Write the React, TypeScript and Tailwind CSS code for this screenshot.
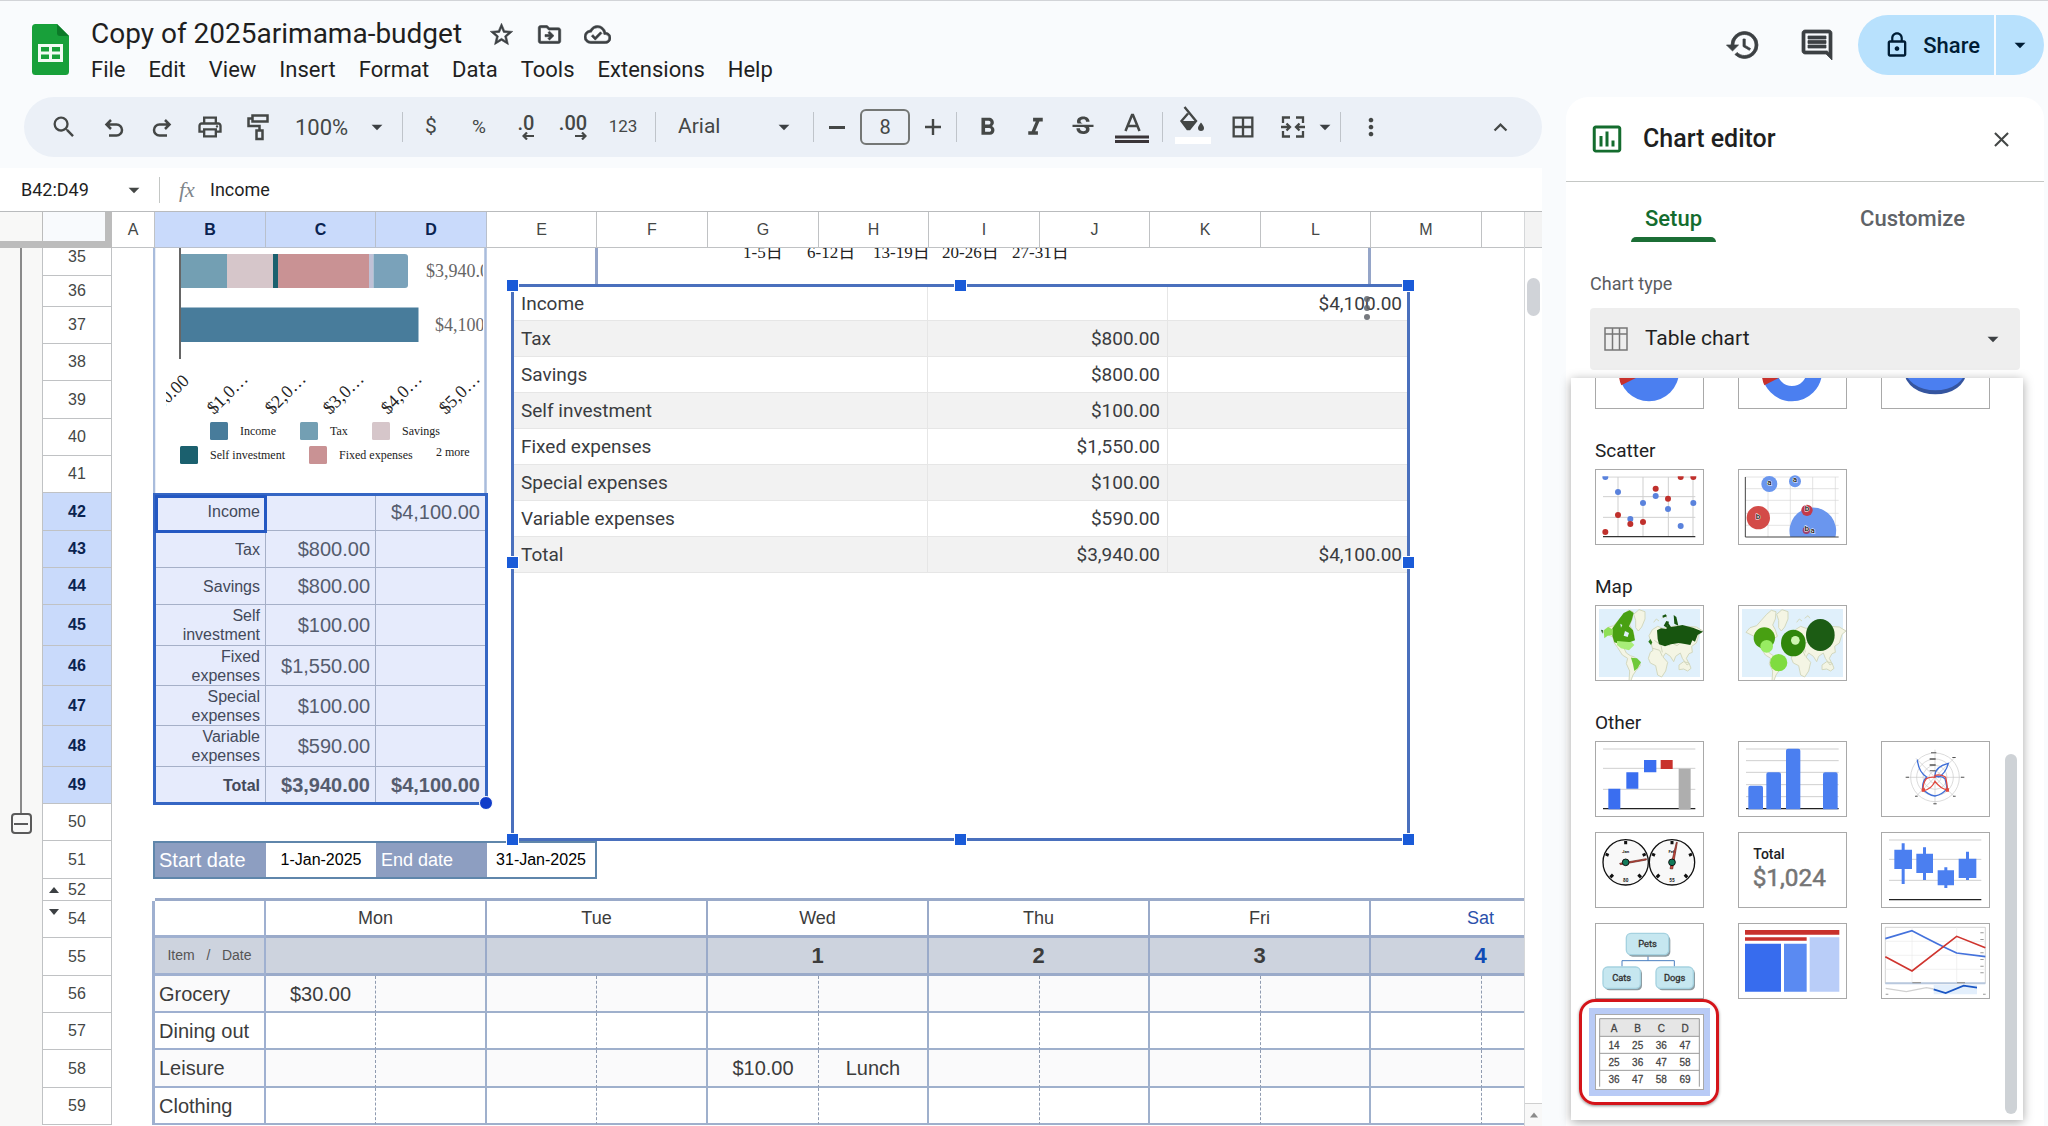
import type { ReactNode } from 'react';
import {
  MdOutlineDriveFileMove,
  MdOutlineCloudDone,
  MdStarBorder,
  MdHistory,
  MdOutlineComment,
  MdLockOutline,
  MdSearch,
  MdOutlinePrint,
  MdArrowDropDown,
  MdFormatBold,
  MdFormatItalic,
  MdStrikethroughS,
  MdBorderAll,
  MdMoreVert,
  MdKeyboardArrowUp,
  MdClose,
  MdInsertChartOutlined,
} from 'react-icons/md';

const MENUS = ['File', 'Edit', 'View', 'Insert', 'Format', 'Data', 'Tools', 'Extensions', 'Help'];
const COLUMNS = ['B', 'C', 'D', 'E', 'F', 'G', 'H', 'I', 'J', 'K', 'L', 'M', ''];
const SELECTED_COLUMNS = ['B', 'C', 'D'];

const BOLDER = '[&_path:not([fill=none])]:[stroke-width:0.5]';

function SheetsLogo() {
  return (
    <svg viewBox="0 0 37 51" className="h-[51px] w-[37px]" aria-hidden="true">
      <path d="M3.500 0H25L37 12v35.500a3.500 3.500 0 0 1-3.500 3.500h-30A3.500 3.500 0 0 1 0 47.500v-44A3.500 3.500 0 0 1 3.500 0z" fill="#18a03a" />
      <path d="M25 0l12 12H28a3 3 0 0 1-3-3z" fill="#0c7a28" />
      <path fillRule="evenodd" d="M6 20h25v18H6zm3 3v4.500h8V23zm11 0v4.500h8V23zM9 30.500V35h8v-4.500zm11 0V35h8v-4.500z" fill="#f3fbf4" />
    </svg>
  );
}

function Header() {
  return (
    <header className="flex h-24 shrink-0 items-start pl-8 pr-1">
      <a href="#home" aria-label="Sheets home" className="mt-[23px]">
        <SheetsLogo />
      </a>
      <div className="ml-[22px] mt-[13px] flex-1">
        <div className="flex h-10 items-center text-[#3c4043]">
          <h1 className="mr-[26px] text-[28px] text-[#1f1f1f]">Copy of 2025arimama-budget</h1>
          <div className="flex items-center gap-[21px]">
            <button aria-label="Star"><MdStarBorder size={27} className={BOLDER} /></button>
            <button aria-label="Move"><MdOutlineDriveFileMove size={27} className={BOLDER} /></button>
            <button aria-label="Saved to Drive"><MdOutlineCloudDone size={27} className={BOLDER} /></button>
          </div>
        </div>
        <nav className="-mt-px flex h-8 items-center gap-[23px] text-[22px] text-[#1f1f1f]">
          {MENUS.map((m) => (
            <button key={m}>{m}</button>
          ))}
        </nav>
      </div>
      <div className="mt-3.5 flex h-[60px] items-center text-[#3c4043]">
        <button aria-label="Version history" className="mr-[38px]"><MdHistory size={36} className={BOLDER} /></button>
        <button aria-label="Comments" className="mr-[23px]"><MdOutlineComment size={36} className={BOLDER} /></button>
        <div className="flex h-[60px] gap-0.5 overflow-hidden rounded-full text-[#001d35]">
          <button className="flex w-[136px] items-center justify-end gap-3 bg-[#b8e1fd] pr-3.5 text-[22px] font-medium">
            <MdLockOutline size={28} />
            Share
          </button>
          <button aria-label="Share options" className="flex w-12 items-center justify-center bg-[#b8e1fd]">
            <MdArrowDropDown size={26} />
          </button>
        </div>
      </div>
    </header>
  );
}

function Tool({ label, children, wide = 'w-12' }: { label: string; children: ReactNode; wide?: string }) {
  return (
    <button aria-label={label} className={`flex h-12 shrink-0 items-center justify-center ${wide}`}>
      {children}
    </button>
  );
}

function Divider() {
  return <div className="h-[30px] w-px shrink-0 bg-[#bfc4ca]" />;
}

function UndoIcon({ flip = false }: { flip?: boolean }) {
  return (
    <svg viewBox="0 0 24 24" className={flip ? 'h-6 w-6 -scale-x-100' : 'h-6 w-6'} fill="none" stroke="currentColor" strokeWidth="2.500">
      <path d="M9 3.500L4.500 8 9 12.500M5 8h9.500a5.500 5.500 0 0 1 0 11H7" transform="translate(0 1.500)" />
    </svg>
  );
}

function DecimalIcon({ digits, right = false }: { digits: string; right?: boolean }) {
  return (
    <span className="flex flex-col items-end text-[20px] font-medium leading-[18px]">
      {digits}
      <svg viewBox="0 0 12 8" className="h-2 w-3" fill="none" stroke="currentColor" strokeWidth="2.200">
        <path d={right ? 'M0 4h11M7 .5L10.500 4 7 7.500' : 'M12 4H1M5 .5L1.500 4 5 7.500'} />
      </svg>
    </span>
  );
}

function Toolbar() {
  return (
    <div role="toolbar" className="ml-6 flex h-[60px] shrink-0 items-center rounded-[30px] bg-[#ebf0f7] pl-3.5 pr-[18px] text-[#444746]">
      <Tool label="Search menus" wide="w-[52px]"><MdSearch size={28} /></Tool>
      <Tool label="Undo"><UndoIcon /></Tool>
      <Tool label="Redo"><UndoIcon flip /></Tool>
      <Tool label="Print"><MdOutlinePrint size={28} /></Tool>
      <Tool label="Paint format">
        <svg viewBox="0 0 24 28" className="h-7 w-6" fill="none" stroke="currentColor" strokeWidth="2.500">
          <path d="M6.500 2.500h15v6h-15zM6.500 5.500H2.500v7.500h11v4M10.500 17.500h6V26h-6z" />
        </svg>
      </Tool>
      <div className="relative ml-[13px] flex w-[107px] items-center">
        <select aria-label="Zoom" defaultValue="100%" className="w-full appearance-none bg-transparent text-[22px]">
          <option>100%</option>
        </select>
        <MdArrowDropDown size={26} className="pointer-events-none absolute right-3 text-[#3c4043]" />
      </div>
      <Divider />
      <Tool label="Format as currency" wide="ml-1 w-12"><span className="text-[21px]">$</span></Tool>
      <Tool label="Format as percent"><span className="text-[19px]">%</span></Tool>
      <Tool label="Decrease decimal places" wide="w-[46px]"><DecimalIcon digits=".0" /></Tool>
      <Tool label="Increase decimal places"><DecimalIcon digits=".00" right /></Tool>
      <Tool label="More formats" wide="w-[52px]"><span className="text-[17px]">123</span></Tool>
      <div className="ml-1.5" />
      <Divider />
      <div className="relative ml-[22px] flex w-[135px] items-center">
        <select aria-label="Font" defaultValue="Arial" className="w-full appearance-none bg-transparent text-[21px]">
          <option>Arial</option>
        </select>
        <MdArrowDropDown size={26} className="pointer-events-none absolute right-4 text-[#3c4043]" />
      </div>
      <Divider />
      <Tool label="Decrease font size" wide="w-[46px]">
        <span className="h-[3px] w-4 bg-[#444746]" />
      </Tool>
      <input aria-label="Font size" defaultValue="8" className="h-9 w-[50px] rounded-md border-2 border-[#747775] bg-transparent text-center text-[20px]" />
      <Tool label="Increase font size" wide="w-[46px]">
        <svg viewBox="0 0 16 16" className="h-4 w-4" stroke="currentColor" strokeWidth="2.400"><path d="M8 0v16M0 8h16" /></svg>
      </Tool>
      <Divider />
      <Tool label="Bold" wide="ml-1.5 w-12"><MdFormatBold size={29} /></Tool>
      <Tool label="Italic"><MdFormatItalic size={29} /></Tool>
      <Tool label="Strikethrough"><MdStrikethroughS size={28} /></Tool>
      <Tool label="Text color" wide="w-[50px]">
        <svg viewBox="0 0 36 40" className="mt-1 h-10 w-9">
          <path d="M11.500 22L18 6h1l6.500 16M14 17h9" fill="none" stroke="currentColor" strokeWidth="2.500" />
          <path d="M1 26.500h34v3H1zM1 31h34v3H1z" fill="#3a3538" />
        </svg>
      </Tool>
      <div className="ml-[5px]" />
      <Divider />
      <Tool label="Fill color" wide="ml-1.5 w-12">
        <svg viewBox="0 0 36 44" className="h-11 w-9">
          <path d="M9.500 2l11.500 14-6.500 8h-2L6.500 16 13 8.500" fill="none" stroke="currentColor" strokeWidth="2.400" />
          <path d="M7 16h14l-6.500 8h-2z" fill="currentColor" />
          <path d="M26 17.500s-3 3.500-3 5.500a3 3 0 0 0 6 0c0-2-3-5.500-3-5.500z" fill="currentColor" />
          <path d="M0 32h36v7H0z" fill="#fff" />
        </svg>
      </Tool>
      <Tool label="Borders" wide="w-[52px]"><MdBorderAll size={28} /></Tool>
      <Tool label="Merge cells">
        <svg viewBox="0 0 24 24" className="h-6 w-6" fill="none" stroke="currentColor" strokeWidth="2.300">
          <path d="M9 2.500H2V8M15 2.500h7V8M9 21.500H2V16M15 21.500h7V16M0 12h8M24 12h-8M5.500 8.500L9 12l-3.500 3.500M18.500 8.500L15 12l3.500 3.500" />
        </svg>
      </Tool>
      <Tool label="Merge options" wide="w-4"><MdArrowDropDown size={26} className="shrink-0 text-[#3c4043]" /></Tool>
      <div className="ml-[7px]" />
      <Divider />
      <Tool label="More" wide="ml-1.5 w-12"><MdMoreVert size={28} /></Tool>
      <div className="flex-1" />
      <Tool label="Hide the menus"><MdKeyboardArrowUp size={27} /></Tool>
    </div>
  );
}

function FormulaBar() {
  return (
    <div className="mt-[11px] flex h-11 shrink-0 items-center border-b border-[#b9bbbd] bg-white text-[18px] text-[#1f1f1f]">
      <input aria-label="Name box" defaultValue="B42:D49" className="ml-[21px] w-[100px]" />
      <button aria-label="Named ranges" className="text-[#444746]"><MdArrowDropDown size={26} /></button>
      <div className="ml-3 h-[26px] w-px bg-[#c4c7c5]" />
      <span className="ml-[19px] w-[31px] font-['Liberation_Serif'] text-[22px] italic text-[#80868b]">fx</span>
      <input aria-label="Formula" defaultValue="Income" className="flex-1" />
    </div>
  );
}

function RowHead({ n, selected = false, marker }: { n: number; selected?: boolean; marker?: 'up' | 'down' }) {
  return (
    <th
      scope="row"
      className={
        selected
          ? 'border-x border-b border-[#c0c2c4] bg-[#c9dafb] text-[16px] text-[#0a2350]'
          : `relative border-x border-b border-[#c0c2c4] bg-white text-[16px] font-normal text-[#444746] ${n === 35 ? 'pb-2.5 align-bottom leading-4' : 'leading-4'}`
      }
    >
      {n}
      {marker && (
        <svg viewBox="0 0 10 6" className={marker === 'up' ? 'absolute left-1.5 top-2 h-1.5 w-2.5' : 'absolute left-1.5 top-2 h-1.5 w-2.5 rotate-180'}>
          <path d="M5 0l5 6H0z" fill="#3c4043" />
        </svg>
      )}
    </th>
  );
}

const TOTALS: { n: number; h: string; label: string; c: string; d: string }[] = [
  { n: 42, h: 'h-[38px]', label: 'Income', c: '', d: '$4,100.00' },
  { n: 43, h: 'h-[37px]', label: 'Tax', c: '$800.00', d: '' },
  { n: 44, h: 'h-[37px]', label: 'Savings', c: '$800.00', d: '' },
  { n: 45, h: 'h-[41px]', label: 'Self investment', c: '$100.00', d: '' },
  { n: 46, h: 'h-[40px]', label: 'Fixed expenses', c: '$1,550.00', d: '' },
  { n: 47, h: 'h-[40px]', label: 'Special expenses', c: '$100.00', d: '' },
  { n: 48, h: 'h-[41px]', label: 'Variable expenses', c: '$590.00', d: '' },
  { n: 49, h: 'h-[37px]', label: 'Total', c: '$3,940.00', d: '$4,100.00' },
];

const EMPTY_ROWS: [number, string][] = [
  [35, 'h-[28px]'],
  [36, 'h-[31px]'],
  [37, 'h-[37px]'],
  [38, 'h-[37px]'],
  [39, 'h-[38px]'],
  [40, 'h-[37px]'],
  [41, 'h-[37px]'],
];

const DAYS = ['Mon', 'Tue', 'Wed', 'Thu', 'Fri', 'Sat'];
const DATES = ['', '', '1', '2', '3', '4'];
const ITEMS: { n: number; h: string; label: string; cells: Record<number, string> }[] = [
  { n: 56, h: 'h-[37px] bg-[#fafafb]', label: 'Grocery', cells: { 0: '$30.00' } },
  { n: 57, h: 'h-[37px]', label: 'Dining out', cells: {} },
  { n: 58, h: 'h-[38px] bg-[#fafafb]', label: 'Leisure', cells: { 4: '$10.00', 5: 'Lunch' } },
  { n: 59, h: 'h-[37px]', label: 'Clothing', cells: {} },
];

function Grid() {
  return (
    <table className="w-[1549px] table-fixed border-separate border-spacing-0 text-[16px]">
      <colgroup>
        <col className="w-[70px]" />
        <col className="w-[43px]" />
        <col className="w-[111px]" />
        <col className="w-[110px]" />
        <col className="w-[111px]" />
        <col className="w-[110px]" />
        <col className="w-[111px]" />
        <col className="w-[111px]" />
        <col className="w-[110px]" />
        <col className="w-[111px]" />
        <col className="w-[110px]" />
        <col className="w-[111px]" />
        <col className="w-[110px]" />
        <col className="w-[111px]" />
        <col className="w-[110px]" />
      </colgroup>
      <thead>
        <tr className="h-9 text-[#444746]">
          <th className="border-b-[7px] border-l border-r-[7px] border-[#bcbcbc] bg-[#f8fafd]" />
          <th className="border-b border-r border-[#c0c2c4] font-normal">A</th>
          {COLUMNS.map((c) => (
            <th
              key={c}
              scope="col"
              className={
                SELECTED_COLUMNS.includes(c)
                  ? 'border-b border-r border-[#b9c0cc] bg-[#c9dafb] text-[#0a2350]'
                  : 'border-b border-r border-[#c0c2c4] font-normal'
              }
            >
              {c}
            </th>
          ))}
        </tr>
      </thead>
      <tbody>
        {EMPTY_ROWS.map(([n, h]) => (
          <tr key={n} className={h}>
            <RowHead n={n} />
            <td colSpan={14} />
          </tr>
        ))}
        {TOTALS.map((r) => {
          const weight = r.n === 49 ? 'font-bold' : '';
          return (
            <tr key={r.n} className={r.h}>
              <RowHead n={r.n} selected />
              <td />
              <td className={`border-b border-r border-[#a6b0c8] bg-[#e6ebfc] pl-5 pr-[5px] text-right leading-[19px] text-[#43495a] ${weight}`}>{r.label}</td>
              <td className={`border-b border-r border-[#a6b0c8] bg-[#e6ebfc] pr-[5px] text-right text-[20px] leading-6 text-[#555c6e] ${weight}`}>{r.c}</td>
              <td className={`border-b border-r border-[#a6b0c8] bg-[#e6ebfc] pr-1.5 text-right text-[20px] leading-6 text-[#555c6e] ${weight}`}>{r.d}</td>
              <td colSpan={10} />
            </tr>
          );
        })}
        <tr className="h-[37px]">
          <RowHead n={50} />
          <td colSpan={14} />
        </tr>
        <tr className="h-[38px]">
          <RowHead n={51} />
          <td className="border-r-2 border-[#5f86ab]" />
          <td className="border-y-2 border-[#5f86ab] bg-[#8d9ec1] pl-1 text-[20px] leading-6 text-white">Start date</td>
          <td className="border-y-2 border-[#5f86ab] text-center text-black">1-Jan-2025</td>
          <td className="border-y-2 border-[#5f86ab] bg-[#8d9ec1] pl-[5px] text-[18px] leading-6 text-white">End date</td>
          <td className="border-y-2 border-r-2 border-[#5f86ab] text-center text-black">31-Jan-2025</td>
          <td colSpan={9} />
        </tr>
        <tr className="h-[22px]">
          <RowHead n={52} marker="up" />
          <td />
          <td colSpan={13} className="border-b-[3px] border-[#9aaac9]" />
        </tr>
        <tr className="h-[37px] text-[18px] text-[#3c3c3c]">
          <RowHead n={54} marker="down" />
          <td className="border-r-[3px] border-[#9fb0d0]" />
          <td className="border-b-[3px] border-r-2 border-[#9fb0d0]" />
          {DAYS.map((d) => (
            <td key={d} colSpan={2} className={`border-b-[3px] border-r-2 border-[#9aaac9] text-center leading-6 ${d === 'Sat' ? 'text-[#2b51ab]' : ''}`}>
              {d}
            </td>
          ))}
        </tr>
        <tr className="h-[38px] bg-[#cdd3de] text-[#3c3c3c]">
          <RowHead n={55} />
          <td className="border-r-[3px] border-[#9fb0d0] bg-white" />
          <td className="whitespace-pre border-b-[3px] border-r-2 border-[#9fb0d0] text-center text-[14px] text-[#555]">{'Item   /   Date'}</td>
          {DATES.map((d, i) => (
            <td key={i} colSpan={2} className={`border-b-[3px] border-r-2 border-[#9aaac9] text-center text-[22px] font-bold leading-6 ${d === '4' ? 'text-[#0f4bb5]' : ''}`}>
              {d}
            </td>
          ))}
        </tr>
        {ITEMS.map((r) => (
          <tr key={r.n} className={`text-[20px] text-[#3c3c3c] ${r.h}`}>
            <RowHead n={r.n} />
            <td className="border-r-[3px] border-[#9fb0d0] bg-white" />
            <td className="border-b-2 border-r-2 border-[#9fb0d0] pl-1 leading-6">{r.label}</td>
            {Array.from({ length: 12 }, (_, i) => (
              <td
                key={i}
                className={
                  i % 2 === 0
                    ? 'border-b-2 border-r border-[#9fb0cc] text-center leading-6 [border-right-color:#8f9bb0] [border-right-style:dashed]'
                    : 'border-b-2 border-r-2 border-[#9fb0cc] text-center leading-6'
                }
              >
                {r.cells[i]}
              </td>
            ))}
          </tr>
        ))}
      </tbody>
    </table>
  );
}

const LEGEND: [number, number, string, string][] = [
  [210, 422, '#487c9b', 'Income'],
  [300, 422, '#739fb3', 'Tax'],
  [372, 422, '#d6c6ca', 'Savings'],
  [180, 446, '#1b606e', 'Self investment'],
  [309, 446, '#c99294', 'Fixed expenses'],
];

/* Stacked bar chart that covers columns B to D; its upper part is scrolled out of view. */
function BarChart() {
  return (
    <svg viewBox="153 248 334 245" className="absolute left-[111px] top-9 h-[245px] w-[334px] font-['Liberation_Serif']">
      <defs>
        <clipPath id="plot"><path d="M166 248h317v245H166z" /></clipPath>
      </defs>
      <path d="M153 248h334v245H153z" fill="#fff" />
      <path d="M154 248v245M485.500 248v245" stroke="#a9bcdc" strokeWidth="2.500" />
      <path d="M181 254h46v34h-46z" fill="#739fb3" />
      <path d="M227 254h46v34h-46z" fill="#d6c6ca" />
      <path d="M273 254h5v34h-5z" fill="#1b606e" />
      <path d="M278 254h91v34h-91z" fill="#c99294" />
      <path d="M369 254h4.500v34H369z" fill="#c0c1d6" />
      <path d="M373.500 254H405a3 3 0 0 1 3 3v28a3 3 0 0 1-3 3h-31.500z" fill="#7aa2ba" />
      <path d="M181 307.500h237.500V342H181z" fill="#487c9b" />
      <path d="M180 248v111" stroke="#333" strokeWidth="1.500" />
      <g clipPath="url(#plot)">
        <text x="426" y="277" fontSize="18" fill="#666">$3,940.0</text>
        <text x="435" y="331" fontSize="18" fill="#666">$4,100</text>
        <text transform="translate(190 382) rotate(-45)" textAnchor="end" fontSize="18" fill="#222">$0.00</text>
        {['$1,0…', '$2,0…', '$3,0…', '$4,0…', '$5,0…'].map((t, i) => (
          <text key={t} transform={`translate(${249 + i * 58} 380) rotate(-45)`} textAnchor="end" fontSize="18" fill="#222">{t}</text>
        ))}
      </g>
      {LEGEND.map(([x, y, fill, label]) => (
        <g key={label}>
          <rect x={x} y={y} width="18" height="18" rx="1.500" fill={fill} />
          <text x={x + 30} y={y + 13} fontSize="12" fill="#222">{label}</text>
        </g>
      ))}
      <text x="436" y="456" fontSize="12" fill="#222">2 more</text>
    </svg>
  );
}

/* Bottom edge of the weekly chart above the table chart. */
function WeeklyChart() {
  return (
    <svg viewBox="595 248 776 38" className="absolute left-[553px] top-9 h-[38px] w-[776px] font-['Liberation_Serif','Noto_Sans_CJK_JP',serif]">
      <path d="M596.500 248v38M1369.500 248v38" stroke="#95a5c8" strokeWidth="3" />
      <g fontSize="17" fill="#222">
        <text x="743" y="258">1-5日</text>
        <text x="807" y="258">6-12日</text>
        <text x="873" y="258">13-19日</text>
        <text x="942" y="258">20-26日</text>
        <text x="1012" y="258">27-31日</text>
      </g>
    </svg>
  );
}

const HANDLES = [
  '-left-2 -top-2',
  'left-1/2 -ml-[7px] -top-2',
  '-right-2 -top-2',
  '-left-2 top-1/2 -mt-[7px]',
  '-right-2 top-1/2 -mt-[7px]',
  '-bottom-2 -left-2',
  '-bottom-2 left-1/2 -ml-[7px]',
  '-bottom-2 -right-2',
];

function TableChart() {
  return (
    <div className="absolute left-[469px] top-[72px] h-[557px] w-[899px] border-[3px] border-[#4a70bd] bg-white">
      <table className="w-full table-fixed border-separate border-spacing-0 font-[Roboto] text-[19px] text-[#3a3c3f]">
        <colgroup>
          <col />
          <col className="w-[240px]" />
          <col className="w-[239px]" />
        </colgroup>
        <tbody>
          {TOTALS.map((r, i) => (
            <tr key={r.n} className={i === 0 ? 'h-[34px]' : i % 2 ? 'h-9 bg-[#f2f2f2]' : 'h-9'}>
              <td className="border-b border-r border-[#e6e6e6] pl-[7px] leading-6">{r.label}</td>
              <td className="border-b border-r border-[#e6e6e6] pr-[7px] text-right leading-6">{r.c}</td>
              <td className="border-b border-[#e6e6e6] pr-[5px] text-right leading-6">{r.d}</td>
            </tr>
          ))}
        </tbody>
      </table>
      <button aria-label="Chart options" className="absolute right-[37px] top-2 text-[#5f6368]">
        <svg viewBox="0 0 6 26" className="h-[26px] w-1.5" fill="currentColor" fillOpacity="0.850">
          <circle cx="3" cy="4" r="3" />
          <circle cx="3" cy="13" r="3" />
          <circle cx="3" cy="22" r="3" />
        </svg>
      </button>
      {HANDLES.map((pos) => (
        <span key={pos} className={`absolute h-[13px] w-[13px] border border-white bg-[#1a5bd8] ${pos}`} />
      ))}
    </div>
  );
}

function Sheet() {
  return (
    <div className="flex min-h-0 flex-1 bg-white font-['Liberation_Sans',Arial,sans-serif]">
      <div className="flex w-[42px] shrink-0 flex-col items-center bg-[#f8f8f7]">
        <div className="h-9 w-full shrink-0 border-b-[7px] border-[#bcbcbc]" />
        <div className="h-[565px] w-[2px] shrink-0 bg-[#8a8a8a]" />
        <button aria-label="Collapse group" className="flex h-[21px] w-[21px] shrink-0 items-center justify-center rounded border-2 border-[#5a5a5a]">
          <span className="h-0.5 w-3.5 bg-[#5a5a5a]" />
        </button>
      </div>
      <div className="relative min-w-0 flex-1 overflow-hidden">
        <Grid />
        <BarChart />
        <WeeklyChart />
        <div className="absolute left-[111px] top-[281px] h-[312px] w-[335px] border-[3px] border-[#3566c4]">
          <div className="absolute -left-px -top-px h-[38px] w-[112px] border-[3px] border-[#2458c2]" />
          <span className="absolute -bottom-2 -right-2 h-[14px] w-[14px] rounded-full border border-white bg-[#103cc9]" />
        </div>
        <TableChart />
      </div>
      <div className="flex w-[18px] shrink-0 flex-col border-l border-[#d5d7d9]">
        <div className="h-9 shrink-0 border-b border-[#c0c2c4] bg-[#f3f3f3]" />
        <div className="flex-1 pl-0.5 pt-[30px]">
          <div className="h-[38px] w-[13px] rounded-full bg-[#d0d3d8]" />
        </div>
        <button aria-label="Scroll up" className="flex h-[23px] items-start justify-center border-t border-[#cfcfcf] bg-[#f8f8f8] pt-2">
          <svg viewBox="0 0 10 6" className="h-1.5 w-2"><path d="M5 0l5 6H0z" fill="#8a8a8a" /></svg>
        </button>
      </div>
    </div>
  );
}

function Thumb({ label, children }: { label: string; children: ReactNode }) {
  return (
    <button role="option" aria-selected={label === 'Table chart'} aria-label={label} className="h-[76px] w-[109px] border border-[#a9a9a9] bg-white">
      <svg viewBox="3 3 321 222" className="block h-full w-full" aria-hidden="true">{children}</svg>
    </button>
  );
}

const BLUE = '#4b7ff0';
const RED = '#c8312c';

const BLUE_DOTS = [[31, 24], [69, 69], [106, 150], [144, 102], [182, 81], [219, 120], [257, 171], [295, 102]];
const RED_DOTS = [[31, 189], [69, 138], [106, 165], [144, 159], [182, 59], [219, 89], [257, 24], [295, 24]];

const LAND =
  'M24 82l12-14 20-6 14-16 16-18 14-12 14 4-2 22-8 18 8 14 6 20-12 8-10 16-8 14 6 12 12 8 12 4 16 14 2 12-12 14-10 14-8 22-4-4 2-30-10-22 4-16-16-10-14-22-10-14-4-18-14-6z' +
  'M116 28l16-14 18 6 0 22-10 24-10 12-8-10 0-22z' +
  'M162 92l10-18 16-10 16 6 40-8 60 4 20 12-12 10-8 26-14 10 2 18-10 4-8 14 8 16-6 4-14-20-6-16-14 10-6 16-10-16-14-10-8 12 14 16-6 26-12 18-12-6-6-28-16-8-6-14 6-18 8-6z' +
  'M252 180l14-10 16 4 6 16-10 8-12-6-14 2z';

function MapBase() {
  return (
    <>
      <path d="M12 12h303v204H12z" fill="#e0f0fb" />
      <path d={LAND} fill="#f4f5e4" stroke="#d3d8be" strokeWidth="3" />
      <path d="M178 106l14 10 18-4 14 10M174 130l20 6 8 18M196 112l6 30M220 108l26 14 12-10M86 120l16 10M108 158l14 8M176 52l8-10 8 6M200 40l10-8 6 8" fill="none" stroke="#d3d8be" strokeWidth="3" />
    </>
  );
}

function Gauge({ cx, name, value, needle }: { cx: number; name: string; value: string; needle: string }) {
  return (
    <g>
      <circle cx={cx} cy="91" r="68" fill="#f8f8f8" stroke="#111" strokeWidth="4" />
      <g stroke="#111" strokeWidth="9">
        <path d={`M${cx} 27v10M${cx - 60} 66l9 4M${cx + 60} 66l-9 4M${cx - 46} 136l8-8M${cx + 46} 136l-8-8`} />
      </g>
      <text x={cx} y="62" textAnchor="middle" fontSize="13" fontWeight="bold" fill="#222">{name}</text>
      <text x={cx} y="149" textAnchor="middle" fontSize="14" fontWeight="bold" fill="#222">{value}</text>
      <path d={needle} fill="#d2493c" stroke="#5a1c16" strokeWidth="2" />
      <circle cx={cx} cy="91" r="10" fill="#137a5a" stroke="#111" strokeWidth="3" />
    </g>
  );
}

function OrgBox({ x, y, w, label }: { x: number; y: number; w: number; label: string }) {
  return (
    <g>
      <rect x={x + 5} y={y + 6} width={w} height="64" rx="14" fill="#8d9da3" />
      <rect x={x} y={y} width={w} height="64" rx="14" fill="#c6e7f0" stroke="#a5d2e0" strokeWidth="4" />
      <text x={x + w / 2} y={y + 41} textAnchor="middle" fontSize="28" stroke="#333" strokeWidth="1" fill="#333">{label}</text>
    </g>
  );
}

function Group({ title, children }: { title?: string; children: ReactNode }) {
  return (
    <div role="group" aria-label={title ?? 'Pie'} className="mb-[26px]">
      {title && <h3 className="h-[34px] text-[19px] leading-[32px] text-[#202124]">{title}</h3>}
      <div className="grid grid-cols-[repeat(3,109px)] gap-x-[34px] gap-y-[15px]">{children}</div>
    </div>
  );
}

function ChartTypeMenu() {
  return (
    <div role="listbox" aria-label="Chart types" className="absolute -left-[19px] top-[70px] flex h-[742px] w-[452px] overflow-hidden bg-white shadow-[0_2px_10px_rgba(0,0,0,0.35)]">
      <div className="-mt-[45px] flex-1 pl-6">
        <Group>
          <Thumb label="Pie chart">
            <circle cx="162" cy="115" r="90" fill={BLUE} />
            <path d="M162 115l-83 42a90 90 0 0 1-7-45z" fill={RED} />
          </Thumb>
          <Thumb label="Doughnut chart">
            <circle cx="162" cy="115" r="67" fill="none" stroke={BLUE} strokeWidth="46" />
            <path d="M122 135l-43 22a90 90 0 0 1-7-45l46 3z" fill={RED} />
          </Thumb>
          <Thumb label="3D pie chart">
            <ellipse cx="163" cy="118" rx="92" ry="66" fill="#35559f" />
            <ellipse cx="163" cy="106" rx="92" ry="66" fill={BLUE} />
          </Thumb>
        </Group>
        <Group title="Scatter">
          <Thumb label="Scatter chart">
            <path d="M24 24h277M24 83h277M24 145h277M69 24v178M144 24v178M220 24v178M294 24v178" stroke="#cfcfcf" strokeWidth="3" />
            <path d="M24 203h277" stroke="#333" strokeWidth="4" />
            {BLUE_DOTS.map(([x, y]) => <circle key={x} cx={x} cy={y} r="9" fill="#5a82dc" />)}
            {RED_DOTS.map(([x, y]) => <circle key={x} cx={x} cy={y} r="9" fill="#c0302c" />)}
            <path d="M20 10h285v12H20z" fill="#fff" />
          </Thumb>
          <Thumb label="Bubble chart">
            <path d="M22 24h280M22 59h280M22 94h280M22 133h280M22 169h280M90 24v180M157 24v180M224 24v180M292 24v180" stroke="#d6d6d6" strokeWidth="2" />
            <circle cx="94" cy="45" r="24" fill="#6a96ee" />
            <circle cx="171" cy="37" r="18" fill="#6a96ee" />
            <circle cx="61" cy="146" r="35" fill="#d34b48" />
            <path d="M157 204a70 70 0 1 1 135 0z" fill="#6a96ee" />
            <circle cx="207" cy="124" r="17" fill="#c43a4a" />
            <circle cx="205" cy="184" r="11" fill="#a0406a" />
            <path d="M22 24v180h280" stroke="#444" strokeWidth="3" fill="none" />
            <g fontSize="24" fontWeight="500" textAnchor="middle" fill="#111" stroke="#fff" strokeWidth="3" paintOrder="stroke">
              <text x="94" y="47">a</text>
              <text x="171" y="39">a</text>
              <text x="60" y="149">b</text>
              <text x="207" y="127">b</text>
              <text x="206" y="186">b</text>
              <text x="224" y="193">a</text>
            </g>
          </Thumb>
        </Group>
        <Group title="Map">
          <Thumb label="Geo chart">
            <MapBase />
            <path d="M52 70l16-22 18-24 18-8 12 8-6 22-8 18 12 12 6 30-22 8-14 6-26-8-6-20z" fill="#48a012" />
            <path d="M26 76l14-10 14 8-2 16-14 2-10 8z" fill="#8fe057" />
            <path d="M66 108l44 4 8 8-16 16-24-6-12-10z" fill="#a8ee78" />
            <path d="M90 78l12 6-4 12-12-4zM76 56l6 4-4 8z" fill="#e0f0fb" />
            <path d="M108 158l18 2 12 12-10 18-10 8-4-20z" fill="#6fc93a" />
            <path d="M186 76l12-6 16 2 6-18 8 12 24-4 10-2 32 8 30 12-16 10-8 20-8-4-6 14-12-2-22-4-24 4-18 6-18-6-4-16z" fill="#17550f" />
            <path d="M202 32l10-4 4 6-12 4zM236 30l8 6 6 26-12-6zM206 62l8-14 8 2-6 18z" fill="#17550f" />
            <path d="M160 110l6-8 6 10-4 8z" fill="#2c7a1b" />
            <path d="M18 74l6 2-2 10z" fill="#17550f" />
          </Thumb>
          <Thumb label="Geo chart with markers">
            <MapBase />
            <circle cx="79" cy="99" r="32" fill="#48a012" />
            <circle cx="86" cy="124" r="19" fill="#98ec62" />
            <ellipse cx="166" cy="114" rx="37" ry="40" fill="#2f860b" />
            <circle cx="172" cy="106" r="13" fill="#cdf5b0" />
            <ellipse cx="247" cy="90" rx="43" ry="48" fill="#1c5c14" />
            <circle cx="122" cy="173" r="26" fill="#7fdc40" />
          </Thumb>
        </Group>
        <Group title="Other">
          <Thumb label="Waterfall chart">
            <path d="M24 24h277M24 82h277M24 145h277" stroke="#cfcfcf" strokeWidth="3" />
            <path d="M24 203h277" stroke="#222" strokeWidth="4" />
            <path d="M40 143h36v62H40zM94 94h36v49H94zM147 57h37v37h-37z" fill="#3a6ef0" />
            <path d="M197 57h36v27h-36z" fill={RED} />
            <path d="M251 83h36v122h-36z" fill="#aeaeae" />
          </Thumb>
          <Thumb label="Histogram">
            <path d="M24 24h278M24 59h278M24 94h278M24 131h278M24 167h278" stroke="#cfcfcf" strokeWidth="3" />
            <path d="M24 203h278" stroke="#222" strokeWidth="4" />
            <g fill={BLUE}>
              <path d="M31 205v-65a6 6 0 0 1 6-6h32a6 6 0 0 1 6 6v65zM85 205v-105a6 6 0 0 1 6-6h32a6 6 0 0 1 6 6v105zM144 205V29a6 6 0 0 1 6-6h31a6 6 0 0 1 6 6v176zM255 205v-105a6 6 0 0 1 6-6h32a6 6 0 0 1 6 6v105z" />
            </g>
          </Thumb>
          <Thumb label="Radar chart">
            <g fill="none" stroke="#c9c9c9" strokeWidth="2">
              <circle cx="162" cy="109" r="73" />
              <circle cx="162" cy="109" r="55" />
              <circle cx="162" cy="109" r="36" />
              <circle cx="162" cy="109" r="18" />
              <path d="M162 26v166M78 109h166M105 52l114 114M219 52L105 166" />
            </g>
            <path d="M109 56q4 38 28 52-14 14-12 36 16 18 37 21 22-4 36-22-2-18-6-30-10-10-30-6-2-30 40-40-8 30-30 42" fill="none" stroke="#3f6fd8" strokeWidth="4" />
            <path d="M162 103q20-4 32 6 4 18 6 38-22-4-38-26-12 26-36 28 0-26 10-36 12-6 26-4z" fill="none" stroke="#e0483e" strokeWidth="4" />
            <path d="M194 142h10v10h-10zM122 142h10v10h-10z" fill="#e0483e" />
            <g fill="#555"><path d="M150 34h16v3h-16zM146 52h18v4h-18zM146 70h18v4h-18zM146 88h18v3h-18zM157 187h10v3h-10zM74 107h10v3H74zM240 107h10v3h-10zM214 48h10v3h-10zM102 164h8v3h-8zM216 164h8v3h-8z" /></g>
          </Thumb>
          <Thumb label="Gauge chart">
            <Gauge cx={92} name="Jan" value="80" needle="M74 94l80-14v4l-78 14z" />
            <Gauge cx={231} name="Feb" value="55" needle="M225 110l19-79h3l-14 80z" />
          </Thumb>
          <Thumb label="Scorecard chart">
            <text x="46" y="82" fontSize="42" fontWeight="500" fill="#202124">Total</text>
            <text x="44" y="162" fontSize="73" stroke="#757575" strokeWidth="1.500" fill="#757575">$1,024</text>
          </Thumb>
          <Thumb label="Candlestick chart">
            <path d="M24 24h277M24 82h277M24 145h277" stroke="#cfcfcf" strokeWidth="3" />
            <path d="M24 203h277" stroke="#222" strokeWidth="4" />
            <path d="M40 53h53v58H40zM62 34h9v122h-9zM106 65h50v58h-50zM126 46h9v98h-9zM170 115h49v45h-49zM190 106h9v62h-9zM233 80h53v58h-53zM255 59h9v85h-9z" fill={BLUE} />
          </Thumb>
          <Thumb label="Organizational chart">
            <path d="M159 95v18M81 131v-18h157v18" fill="none" stroke="#4a7fc0" strokeWidth="3" />
            <OrgBox x={94} y={31} w={127} label="Pets" />
            <OrgBox x={24} y={132} w={112} label="Cats" />
            <OrgBox x={183} y={132} w={112} label="Dogs" />
          </Thumb>
          <Thumb label="Treemap chart">
            <path d="M21 21h283v14H21zM21 43h185v10H21z" fill={RED} />
            <path d="M21 62h108v144H21z" fill="#376cee" />
            <path d="M138 62h68v144h-68z" fill="#5a8af2" />
            <path d="M215 43h89v163h-89z" fill="#b9cdf8" />
          </Thumb>
          <Thumb label="Timeline chart">
            <path d="M13 13h300v168H13z" fill="none" stroke="#bdbdbd" strokeWidth="2" />
            <path d="M13 55h300M13 97h300M13 139h300M93 13v168M227 13v168" stroke="#ececec" strokeWidth="2" />
            <path d="M13 178h300v6H13z" fill="#b8c8de" />
            <path d="M13 47l80-24q80 42 134 67l86 11" fill="none" stroke="#4472dc" strokeWidth="5" />
            <path d="M13 101l80 43L227 40l86 34" fill="none" stroke="#cf342e" strokeWidth="5" />
            <path d="M14 196l62 10 60-12 22 4" fill="none" stroke="#d0d0d0" strokeWidth="4" />
            <path d="M158 186h130v28H158z" fill="#e3effc" />
            <path d="M158 199l36 11 54-22 40 6" fill="none" stroke="#1a56c4" strokeWidth="5" />
            <g fill="#999"><path d="M298 28h10v3h-10zM298 48h10v3h-10zM298 88h10v3h-10zM298 108h10v3h-10zM298 128h10v3h-10zM298 148h10v3h-10zM94 177h26v4H94zM228 177h24v4h-24zM14 212h8v3h-8zM306 212h8v3h-8z" /></g>
          </Thumb>
          <div className="relative">
            <span className="absolute -left-1.5 -top-1.5 h-[88px] w-[121px] bg-[#b9cbf6]" />
            <span className="pointer-events-none absolute -left-4 -top-[15px] z-10 h-[106px] w-[140px] rounded-[16px] border-[3px] border-[#d4141a] shadow-[0_1px_3px_rgba(0,0,0,0.45)]" />
            <div className="relative">
              <Thumb label="Table chart">
                <path d="M15 15h297v52H15z" fill="#e6e6e6" />
                <path d="M14 218V14h299v204M14 67h299M14 118h299M14 169h299" fill="none" stroke="#9a9a9a" strokeWidth="3" />
                <g fontSize="30" textAnchor="middle" fill="#444" stroke="#444" strokeWidth="0.800" fontFamily="Liberation Sans">
                  {[['A', 'B', 'C', 'D'], ['14', '25', '36', '47'], ['25', '36', '47', '58'], ['36', '47', '58', '69']].map((row, y) =>
                    row.map((t, x) => <text key={`${x}${y}`} x={57 + x * 71} y={53 + y * 51}>{t}</text>),
                  )}
                </g>
              </Thumb>
            </div>
          </div>
        </Group>
      </div>
      <div className="mr-1.5 mt-[376px] h-[360px] w-3 shrink-0 rounded-full bg-[#ced2d6]" />
    </div>
  );
}

function ChartEditor() {
  return (
    <aside className="ml-6 mr-1 w-[478px] shrink-0 rounded-t-[22px] bg-white text-[#1f1f1f]">
      <div className="flex h-[85px] items-center border-b border-[#c4c7c5] pl-[23px] pr-[30px]">
        <MdInsertChartOutlined size={36} className="text-[#146c2e]" />
        <h2 className="ml-[18px] flex-1 text-[25px] font-medium">Chart editor</h2>
        <button aria-label="Close" className="text-[#444746]"><MdClose size={25} /></button>
      </div>
      <div role="tablist" className="flex h-[60px] items-end text-[22px] font-medium">
        <div className="flex w-[215px] justify-center">
          <button role="tab" aria-selected="true" className="flex w-[85px] flex-col items-center gap-0.5 text-[#146c2e]">
            Setup
            <span className="h-[5px] w-full rounded-t-full bg-[#1b6e35]" />
          </button>
        </div>
        <div className="flex flex-1 justify-center">
          <button role="tab" aria-selected="false" className="pb-[7px] text-[#5f6368]">Customize</button>
        </div>
      </div>
      <div className="px-6 pt-6">
        <label htmlFor="chart-type" className="flex h-[34px] items-center text-[18px] text-[#5a5c5f]">Chart type</label>
        <div className="relative mt-2 flex h-[62px] items-center">
          <select id="chart-type" defaultValue="Table chart" className="h-full w-full appearance-none rounded bg-[#eeeeee] pl-[55px] text-[21px]">
            <option>Table chart</option>
          </select>
          <svg viewBox="0 0 24 24" className="pointer-events-none absolute left-3.5 h-6 w-6" fill="none" stroke="#777" strokeWidth="1.500">
            <path d="M1 1h22v22H1zM1 7h22M8.500 1v22M15.500 1v22" />
          </svg>
          <MdArrowDropDown size={26} className="pointer-events-none absolute right-3.5 text-[#3c4043]" />
          <ChartTypeMenu />
        </div>
      </div>
    </aside>
  );
}

export default function App() {
  return (
    <div className="flex h-screen flex-col overflow-hidden border-t border-[#d2d4d8] bg-[#f9fbfd] font-[Roboto,sans-serif]">
      <Header />
      <div className="flex min-h-0 flex-1">
        <main className="flex min-w-0 flex-1 flex-col">
          <Toolbar />
          <FormulaBar />
          <Sheet />
        </main>
        <ChartEditor />
      </div>
    </div>
  );
}
